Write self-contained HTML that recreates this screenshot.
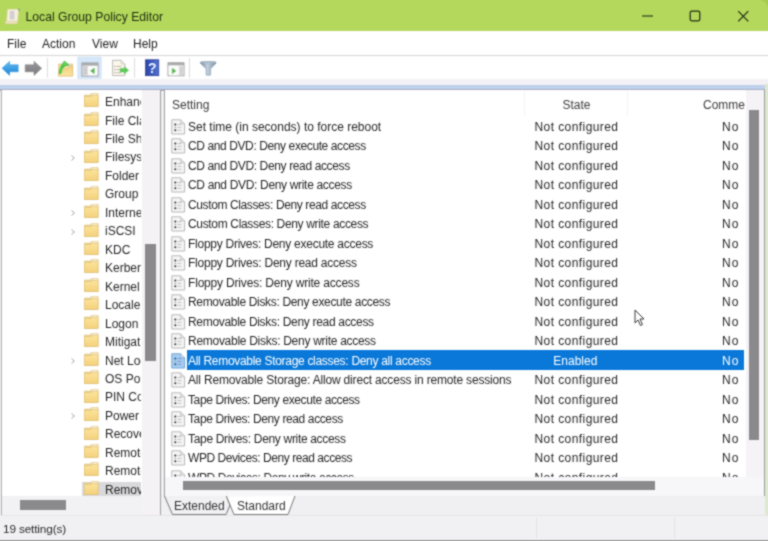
<!DOCTYPE html>
<html><head><meta charset="utf-8">
<style>
*{margin:0;padding:0;box-sizing:border-box}
html,body{width:768px;height:541px;overflow:hidden;background:#f0eff1;font-family:"Liberation Sans",sans-serif;color:#262626}
#wrap{position:absolute;left:0;top:0;width:768px;height:541px;overflow:hidden;filter:url(#bl)}
.rw,.tr,.hd,#menu span,#status .t,#title .t{-webkit-text-stroke:0px currentColor}
.abs{position:absolute}
#title{left:0;top:0;width:768px;height:31.5px;background:#b3d85c}
#title .t{left:25.5px;top:2px;line-height:31px;font-size:12.2px;color:#1e2e10;white-space:nowrap}
#menu{left:0;top:31px;width:768px;height:24px;background:#fff}
#menu span{position:absolute;top:0.3px;line-height:26px;font-size:12px;color:#222}
#menuline{left:0;top:54.5px;width:768px;height:1.5px;background:#d6d4d8}
#tool{left:0;top:56px;width:768px;height:22.5px;background:#fff}
#gap{left:0;top:78.5px;width:768px;height:6.5px;background:#f3f1f5}
#blueline{left:0;top:85px;width:765px;height:4.3px;background:#bed0ec}
#grayline{left:0;top:89.3px;width:765px;height:1.5px;background:#a9aec2}
#lp{left:1px;top:90px;width:160px;height:426px;background:#fff;border-left:1px solid #b0b0b0;border-right:1px solid #a0a0a0;border-bottom:1px solid #a0a0a0}
#lvs{left:142px;top:90px;width:18px;height:425px;background:#f4f2f5}
#lvt{left:145px;top:244px;width:10.5px;height:117px;background:#8a898b}
#lhs{left:2px;top:496px;width:140px;height:19px;background:#f2f1f3}
#lht{left:20px;top:500px;width:46px;height:10px;background:#8a898b}
#lclip{left:2px;top:90px;width:139.3px;height:406px;overflow:hidden}
.tr{position:absolute;left:0;width:140px;height:18.5px;line-height:18.5px;font-size:12px;white-space:nowrap;color:#262626}
.tr .fi{position:absolute;left:81.8px;top:0.2px}
.tr .tx{position:absolute;left:103px;top:0}
.tr .ex{position:absolute;left:69px;top:6.5px;width:4px;height:6px}
.tr.sel .hl{position:absolute;left:80px;top:1.5px;width:60px;height:16px;background:#d9d8da}
#rp{left:164px;top:90px;width:601px;height:406px;background:#fff;border-left:1px solid #a0a0a0;border-right:1px solid #9a9aa0;border-bottom:1px solid #8c8c8c}
#rclip{left:165px;top:90px;width:580px;height:387px;overflow:hidden}
#rvs{left:745.5px;top:90px;width:18.5px;height:387px;background:#f5f3f6}
#rvt{left:749px;top:110px;width:9.5px;height:330px;background:#8a898b}
#rhs{left:165px;top:477px;width:599px;height:18.5px;background:#f7f6f8}
#rht{left:183px;top:481px;width:472px;height:9px;background:#8a898b}
.hd{position:absolute;top:0;height:26px;line-height:31px;font-size:12px;color:#3a3a3a;white-space:nowrap}
.colsep{position:absolute;top:1px;width:1px;height:24px;background:#f3f2f5}
.rw{position:absolute;left:0;width:580px;height:19.5px;line-height:19.5px;font-size:12px;white-space:nowrap;color:#262626}
.rw .di{position:absolute;left:5.6px;top:0.7px}
.rw .s{position:absolute;left:23px;top:0}
.rw .st{position:absolute;left:369.5px;top:0;letter-spacing:0.42px}
.rw .no{position:absolute;left:557px;top:0;letter-spacing:1px}
.rw.sel .hlb{position:absolute;left:21.5px;top:-1.5px;width:557.5px;height:19.5px;background:#0a78d8}
.rw.sel{color:#fff}
#tabs{left:164px;top:496px;width:140px;height:20px}
#statusline{left:0;top:515px;width:768px;height:1px;background:#e6e5e8}
#status{left:0;top:516px;width:768px;height:25px;background:#f1f0f3}
#status .t{left:3px;top:0.6px;line-height:25px;font-size:11.8px;letter-spacing:-0.15px;color:#2a2a2a}
#bottomline{left:0;top:539.5px;width:768px;height:1.5px;background:#9a9a9a}
#rightedge{left:765px;top:84px;width:3px;height:457px;background:#dfe8d0}
</style></head><body><svg width="0" height="0" style="position:absolute"><filter id="bl" x="0" y="0" width="100%" height="100%" color-interpolation-filters="sRGB"><feConvolveMatrix order="3" kernelMatrix="1 2 1 2 8 2 1 2 1" divisor="20" edgeMode="duplicate"/></filter></svg><div id="wrap">

<div id="title" class="abs"><svg class="abs" style="left:0;top:0" width="24" height="31" viewBox="0 0 24 31"><path d="M7.5 9.3 H18.6 L17.6 21.5 H6.6 Z" fill="#f6f0da" stroke="#e0d6b4" stroke-width="0.6"/><rect x="9.8" y="11" width="4.6" height="8.5" fill="#d3cdd6"/><path d="M17.8 9 C19.2 9 19.8 10 19.2 11.2" fill="none" stroke="#6f7f86" stroke-width="1"/><path d="M5.4 21.3 H17.8 L16.8 23.8 H6.2 C5.2 23.8 5 22 5.4 21.3 Z" fill="#f1e6c4" stroke="#d8c9a0" stroke-width="0.6"/></svg><div class="t abs">Local Group Policy Editor</div>
<svg class="abs" style="left:750px;top:0" width="18" height="18" viewBox="0 0 18 18"><path d="M9 0 H18 V9 C18 4 14 0 9 0 Z" fill="#a6cc4e"/></svg>
<svg class="abs" style="left:641px;top:10px" width="14" height="12"><path d="M1 6 H12" stroke="#1f2a14" stroke-width="1.1"/></svg>
<svg class="abs" style="left:689px;top:10px" width="13" height="13"><rect x="1.2" y="1.2" width="9.6" height="9.6" rx="1.5" fill="none" stroke="#1f2a14" stroke-width="1.2"/></svg>
<svg class="abs" style="left:737px;top:10px" width="13" height="13"><path d="M1.2 1.2 L11.3 11.3 M11.3 1.2 L1.2 11.3" stroke="#1f2a14" stroke-width="1.2"/></svg>
</div>
<div id="menu" class="abs"><span style="left:7px">File</span><span style="left:42px">Action</span><span style="left:92px">View</span><span style="left:133px">Help</span></div><div id="menuline" class="abs"></div>
<div id="tool" class="abs"></div>
<svg class="abs" style="left:0;top:56px" width="230" height="24" viewBox="0 56 230 24">
<defs>
<linearGradient id="gb" x1="0" y1="0" x2="0" y2="1"><stop offset="0" stop-color="#62bdf2"/><stop offset="1" stop-color="#1b82d4"/></linearGradient>
<linearGradient id="gg" x1="0" y1="0" x2="0" y2="1"><stop offset="0" stop-color="#9a9a9c"/><stop offset="1" stop-color="#7a7a7c"/></linearGradient>
<linearGradient id="gfo" x1="0" y1="0" x2="0" y2="1"><stop offset="0" stop-color="#f3d27c"/><stop offset="1" stop-color="#fbe3a2"/></linearGradient>
<linearGradient id="gh" x1="0" y1="0" x2="1" y2="0"><stop offset="0" stop-color="#2a44a8"/><stop offset="1" stop-color="#4f73d4"/></linearGradient>
<linearGradient id="gf" x1="0" y1="0" x2="1" y2="0"><stop offset="0" stop-color="#71879e"/><stop offset="0.45" stop-color="#c3d0dc"/><stop offset="1" stop-color="#768ca2"/></linearGradient>
</defs>
<path d="M2 68.3 L9.6 61.3 V64.8 H18.2 V71.8 H9.6 V75.4 Z" fill="url(#gb)" stroke="#2f8fd6" stroke-width="0.5" stroke-linejoin="round"/>
<path d="M41.6 68.3 L34 61.3 V64.8 H25.2 V71.8 H34 V75.4 Z" fill="url(#gg)" stroke="#7c7c7e" stroke-width="0.5" stroke-linejoin="round"/>
<rect x="47" y="58" width="1" height="19.5" fill="#dcdadd"/>
<path d="M58.5 64 H72.6 V76 H58.5 Z" fill="#f4df98" stroke="#d9b86a" stroke-width="0.6"/>
<rect x="67" y="64.3" width="5" height="2" fill="#d9d2bd"/>
<path d="M58.5 76 V72.2 L60.8 71.8 C64.5 70.5 68 68 72.6 65.8 V76 Z" fill="url(#gfo)" stroke="#d6b466" stroke-width="0.5"/>
<path d="M60.2 72.8 C60.2 70 61.5 67.5 63.6 65.8" fill="none" stroke="#4fc84a" stroke-width="2.8" stroke-linecap="round"/>
<path d="M60.8 66.4 L64.4 61 L68.8 65 Z" fill="#5ed45a" stroke="#46b843" stroke-width="0.8" stroke-linejoin="round"/>
<rect x="77.8" y="57" width="23.4" height="21.5" fill="#d5e7f9" stroke="#cadff5" stroke-width="0.6"/>
<rect x="82" y="63" width="16" height="13" fill="#f6f6f6" stroke="#8f8f93" stroke-width="0.9"/>
<rect x="82" y="63" width="16" height="2.6" fill="#a9a9ad"/>
<rect x="82.6" y="66" width="5.2" height="9.5" fill="#d9d9dc"/>
<path d="M83.5 68 H86.8 M83.5 70.5 H86.8 M83.5 73 H86.8" stroke="#a0a0a4" stroke-width="0.6"/>
<rect x="88.3" y="66.2" width="9.1" height="9.2" fill="#fcfcfc"/>
<path d="M90.6 70.9 L94.2 68.2 V73.6 Z" fill="#55b34e" stroke="#55b34e" stroke-width="0.6" stroke-linejoin="round"/>
<path d="M112.6 60.3 H121.2 L125 64.1 V75.6 H112.6 Z" fill="#fbf7ea" stroke="#a9a9a9" stroke-width="0.8"/>
<path d="M121.2 60.3 V64.1 H125" fill="#e9e6dc" stroke="#b5b5b5" stroke-width="0.5"/>
<path d="M114.5 66.4 H115.5 M114.5 69.6 H115.5 M114.5 72.7 H115.5" stroke="#6a6a6a" stroke-width="0.9"/>
<path d="M116.6 66.4 H121.5 M116.6 69.6 H121 M116.6 72.7 H121" stroke="#9a9a9a" stroke-width="0.7"/>
<path d="M120.2 68.6 H124.4 V66.8 L128.7 70.3 L124.4 73.8 V72 H120.2 Z" fill="#5ec95a" stroke="#4dbb4a" stroke-width="0.4" stroke-linejoin="round"/>
<rect x="134" y="58" width="1" height="19.5" fill="#dcdadd"/>
<rect x="145.6" y="59.8" width="13.2" height="15.9" fill="url(#gh)" stroke="#22348a" stroke-width="0.7"/>
<text x="152.3" y="73.2" text-anchor="middle" font-family="Liberation Sans" font-size="14" font-weight="bold" fill="#eef2ff">?</text>
<rect x="168" y="62.8" width="16" height="13" fill="#f3f3f3" stroke="#959598" stroke-width="0.9"/>
<rect x="168" y="62.8" width="16" height="2.5" fill="#ababae"/>
<rect x="168.6" y="65.8" width="9.8" height="9.6" fill="#fcfcfc"/>
<path d="M172.3 68.3 L175.8 70.9 L172.3 73.5 Z" fill="#55b34e" stroke="#55b34e" stroke-width="0.6" stroke-linejoin="round"/>
<rect x="179" y="65.8" width="4.5" height="9.6" fill="#dedee0"/>
<circle cx="181.2" cy="68" r="0.55" fill="#8a8a8a"/><circle cx="181.2" cy="70.6" r="0.55" fill="#8a8a8a"/><circle cx="181.2" cy="73.2" r="0.55" fill="#8a8a8a"/>
<rect x="189" y="58" width="1" height="19.5" fill="#dcdadd"/>
<path d="M200.4 62.2 C200.4 61.2 216 61.2 216 62.2 V63.2 L210.6 68.8 V74.8 C210.6 75.6 206 75.6 206 74.8 V68.8 L200.4 63.2 Z" fill="url(#gf)" stroke="#7990a6" stroke-width="0.5"/>
<ellipse cx="208.2" cy="62.3" rx="7.2" ry="0.9" fill="#a9b9c8"/>
</svg>
<div id="gap" class="abs"></div><div id="blueline" class="abs"></div><div id="grayline" class="abs"></div>
<div id="lp" class="abs"></div><div id="lvs" class="abs"></div><div id="lvt" class="abs"></div><div id="lhs" class="abs"></div><div id="lht" class="abs"></div>
<div id="lclip" class="abs">
<div class="tr" style="top:3.10px"><svg class="fi" width="15" height="14" viewBox="0 0 15 14"><defs><linearGradient id="gfd" x1="0" y1="0" x2="0" y2="1"><stop offset="0" stop-color="#fce49c"/><stop offset="1" stop-color="#f4d17c"/></linearGradient></defs><path d="M0.4 2 H6 L7.8 0.3 H14.1 V13.5 H0.4 Z" fill="#ecd594" stroke="#dcc286" stroke-width="0.6"/><rect x="8.3" y="0.8" width="5.2" height="2" fill="#f7efd6"/><path d="M0.4 3.5 H6.8 L8.6 2.5 H14.1 V13.5 H0.4 Z" fill="url(#gfd)" stroke="#dcbc70" stroke-width="0.6"/></svg><span class="tx">Enhanced Storage Access</span></div>
<div class="tr" style="top:21.56px"><svg class="fi" width="15" height="14" viewBox="0 0 15 14"><defs><linearGradient id="gfd" x1="0" y1="0" x2="0" y2="1"><stop offset="0" stop-color="#fce49c"/><stop offset="1" stop-color="#f4d17c"/></linearGradient></defs><path d="M0.4 2 H6 L7.8 0.3 H14.1 V13.5 H0.4 Z" fill="#ecd594" stroke="#dcc286" stroke-width="0.6"/><rect x="8.3" y="0.8" width="5.2" height="2" fill="#f7efd6"/><path d="M0.4 3.5 H6.8 L8.6 2.5 H14.1 V13.5 H0.4 Z" fill="url(#gfd)" stroke="#dcbc70" stroke-width="0.6"/></svg><span class="tx">File Classification Infrastructure</span></div>
<div class="tr" style="top:40.02px"><svg class="fi" width="15" height="14" viewBox="0 0 15 14"><defs><linearGradient id="gfd" x1="0" y1="0" x2="0" y2="1"><stop offset="0" stop-color="#fce49c"/><stop offset="1" stop-color="#f4d17c"/></linearGradient></defs><path d="M0.4 2 H6 L7.8 0.3 H14.1 V13.5 H0.4 Z" fill="#ecd594" stroke="#dcc286" stroke-width="0.6"/><rect x="8.3" y="0.8" width="5.2" height="2" fill="#f7efd6"/><path d="M0.4 3.5 H6.8 L8.6 2.5 H14.1 V13.5 H0.4 Z" fill="url(#gfd)" stroke="#dcbc70" stroke-width="0.6"/></svg><span class="tx">File Share Shadow Copy Provider</span></div>
<div class="tr" style="top:58.48px"><svg class="ex" viewBox="0 0 4 6"><path d="M0.5 0.5 L3.3 3 L0.5 5.5" fill="none" stroke="#9a9a9a" stroke-width="0.9"/></svg><svg class="fi" width="15" height="14" viewBox="0 0 15 14"><defs><linearGradient id="gfd" x1="0" y1="0" x2="0" y2="1"><stop offset="0" stop-color="#fce49c"/><stop offset="1" stop-color="#f4d17c"/></linearGradient></defs><path d="M0.4 2 H6 L7.8 0.3 H14.1 V13.5 H0.4 Z" fill="#ecd594" stroke="#dcc286" stroke-width="0.6"/><rect x="8.3" y="0.8" width="5.2" height="2" fill="#f7efd6"/><path d="M0.4 3.5 H6.8 L8.6 2.5 H14.1 V13.5 H0.4 Z" fill="url(#gfd)" stroke="#dcbc70" stroke-width="0.6"/></svg><span class="tx">Filesystem</span></div>
<div class="tr" style="top:76.94px"><svg class="fi" width="15" height="14" viewBox="0 0 15 14"><defs><linearGradient id="gfd" x1="0" y1="0" x2="0" y2="1"><stop offset="0" stop-color="#fce49c"/><stop offset="1" stop-color="#f4d17c"/></linearGradient></defs><path d="M0.4 2 H6 L7.8 0.3 H14.1 V13.5 H0.4 Z" fill="#ecd594" stroke="#dcc286" stroke-width="0.6"/><rect x="8.3" y="0.8" width="5.2" height="2" fill="#f7efd6"/><path d="M0.4 3.5 H6.8 L8.6 2.5 H14.1 V13.5 H0.4 Z" fill="url(#gfd)" stroke="#dcbc70" stroke-width="0.6"/></svg><span class="tx">Folder Redirection</span></div>
<div class="tr" style="top:95.40px"><svg class="fi" width="15" height="14" viewBox="0 0 15 14"><defs><linearGradient id="gfd" x1="0" y1="0" x2="0" y2="1"><stop offset="0" stop-color="#fce49c"/><stop offset="1" stop-color="#f4d17c"/></linearGradient></defs><path d="M0.4 2 H6 L7.8 0.3 H14.1 V13.5 H0.4 Z" fill="#ecd594" stroke="#dcc286" stroke-width="0.6"/><rect x="8.3" y="0.8" width="5.2" height="2" fill="#f7efd6"/><path d="M0.4 3.5 H6.8 L8.6 2.5 H14.1 V13.5 H0.4 Z" fill="url(#gfd)" stroke="#dcbc70" stroke-width="0.6"/></svg><span class="tx">Group Policy</span></div>
<div class="tr" style="top:113.86px"><svg class="ex" viewBox="0 0 4 6"><path d="M0.5 0.5 L3.3 3 L0.5 5.5" fill="none" stroke="#9a9a9a" stroke-width="0.9"/></svg><svg class="fi" width="15" height="14" viewBox="0 0 15 14"><defs><linearGradient id="gfd" x1="0" y1="0" x2="0" y2="1"><stop offset="0" stop-color="#fce49c"/><stop offset="1" stop-color="#f4d17c"/></linearGradient></defs><path d="M0.4 2 H6 L7.8 0.3 H14.1 V13.5 H0.4 Z" fill="#ecd594" stroke="#dcc286" stroke-width="0.6"/><rect x="8.3" y="0.8" width="5.2" height="2" fill="#f7efd6"/><path d="M0.4 3.5 H6.8 L8.6 2.5 H14.1 V13.5 H0.4 Z" fill="url(#gfd)" stroke="#dcbc70" stroke-width="0.6"/></svg><span class="tx">Internet Communication Management</span></div>
<div class="tr" style="top:132.32px"><svg class="ex" viewBox="0 0 4 6"><path d="M0.5 0.5 L3.3 3 L0.5 5.5" fill="none" stroke="#9a9a9a" stroke-width="0.9"/></svg><svg class="fi" width="15" height="14" viewBox="0 0 15 14"><defs><linearGradient id="gfd" x1="0" y1="0" x2="0" y2="1"><stop offset="0" stop-color="#fce49c"/><stop offset="1" stop-color="#f4d17c"/></linearGradient></defs><path d="M0.4 2 H6 L7.8 0.3 H14.1 V13.5 H0.4 Z" fill="#ecd594" stroke="#dcc286" stroke-width="0.6"/><rect x="8.3" y="0.8" width="5.2" height="2" fill="#f7efd6"/><path d="M0.4 3.5 H6.8 L8.6 2.5 H14.1 V13.5 H0.4 Z" fill="url(#gfd)" stroke="#dcbc70" stroke-width="0.6"/></svg><span class="tx">iSCSI</span></div>
<div class="tr" style="top:150.78px"><svg class="fi" width="15" height="14" viewBox="0 0 15 14"><defs><linearGradient id="gfd" x1="0" y1="0" x2="0" y2="1"><stop offset="0" stop-color="#fce49c"/><stop offset="1" stop-color="#f4d17c"/></linearGradient></defs><path d="M0.4 2 H6 L7.8 0.3 H14.1 V13.5 H0.4 Z" fill="#ecd594" stroke="#dcc286" stroke-width="0.6"/><rect x="8.3" y="0.8" width="5.2" height="2" fill="#f7efd6"/><path d="M0.4 3.5 H6.8 L8.6 2.5 H14.1 V13.5 H0.4 Z" fill="url(#gfd)" stroke="#dcbc70" stroke-width="0.6"/></svg><span class="tx">KDC</span></div>
<div class="tr" style="top:169.24px"><svg class="fi" width="15" height="14" viewBox="0 0 15 14"><defs><linearGradient id="gfd" x1="0" y1="0" x2="0" y2="1"><stop offset="0" stop-color="#fce49c"/><stop offset="1" stop-color="#f4d17c"/></linearGradient></defs><path d="M0.4 2 H6 L7.8 0.3 H14.1 V13.5 H0.4 Z" fill="#ecd594" stroke="#dcc286" stroke-width="0.6"/><rect x="8.3" y="0.8" width="5.2" height="2" fill="#f7efd6"/><path d="M0.4 3.5 H6.8 L8.6 2.5 H14.1 V13.5 H0.4 Z" fill="url(#gfd)" stroke="#dcbc70" stroke-width="0.6"/></svg><span class="tx">Kerberos</span></div>
<div class="tr" style="top:187.70px"><svg class="fi" width="15" height="14" viewBox="0 0 15 14"><defs><linearGradient id="gfd" x1="0" y1="0" x2="0" y2="1"><stop offset="0" stop-color="#fce49c"/><stop offset="1" stop-color="#f4d17c"/></linearGradient></defs><path d="M0.4 2 H6 L7.8 0.3 H14.1 V13.5 H0.4 Z" fill="#ecd594" stroke="#dcc286" stroke-width="0.6"/><rect x="8.3" y="0.8" width="5.2" height="2" fill="#f7efd6"/><path d="M0.4 3.5 H6.8 L8.6 2.5 H14.1 V13.5 H0.4 Z" fill="url(#gfd)" stroke="#dcbc70" stroke-width="0.6"/></svg><span class="tx">Kernel DMA Protection</span></div>
<div class="tr" style="top:206.16px"><svg class="fi" width="15" height="14" viewBox="0 0 15 14"><defs><linearGradient id="gfd" x1="0" y1="0" x2="0" y2="1"><stop offset="0" stop-color="#fce49c"/><stop offset="1" stop-color="#f4d17c"/></linearGradient></defs><path d="M0.4 2 H6 L7.8 0.3 H14.1 V13.5 H0.4 Z" fill="#ecd594" stroke="#dcc286" stroke-width="0.6"/><rect x="8.3" y="0.8" width="5.2" height="2" fill="#f7efd6"/><path d="M0.4 3.5 H6.8 L8.6 2.5 H14.1 V13.5 H0.4 Z" fill="url(#gfd)" stroke="#dcbc70" stroke-width="0.6"/></svg><span class="tx">Locale Services</span></div>
<div class="tr" style="top:224.62px"><svg class="fi" width="15" height="14" viewBox="0 0 15 14"><defs><linearGradient id="gfd" x1="0" y1="0" x2="0" y2="1"><stop offset="0" stop-color="#fce49c"/><stop offset="1" stop-color="#f4d17c"/></linearGradient></defs><path d="M0.4 2 H6 L7.8 0.3 H14.1 V13.5 H0.4 Z" fill="#ecd594" stroke="#dcc286" stroke-width="0.6"/><rect x="8.3" y="0.8" width="5.2" height="2" fill="#f7efd6"/><path d="M0.4 3.5 H6.8 L8.6 2.5 H14.1 V13.5 H0.4 Z" fill="url(#gfd)" stroke="#dcbc70" stroke-width="0.6"/></svg><span class="tx">Logon</span></div>
<div class="tr" style="top:243.08px"><svg class="fi" width="15" height="14" viewBox="0 0 15 14"><defs><linearGradient id="gfd" x1="0" y1="0" x2="0" y2="1"><stop offset="0" stop-color="#fce49c"/><stop offset="1" stop-color="#f4d17c"/></linearGradient></defs><path d="M0.4 2 H6 L7.8 0.3 H14.1 V13.5 H0.4 Z" fill="#ecd594" stroke="#dcc286" stroke-width="0.6"/><rect x="8.3" y="0.8" width="5.2" height="2" fill="#f7efd6"/><path d="M0.4 3.5 H6.8 L8.6 2.5 H14.1 V13.5 H0.4 Z" fill="url(#gfd)" stroke="#dcbc70" stroke-width="0.6"/></svg><span class="tx">Mitigation Options</span></div>
<div class="tr" style="top:261.54px"><svg class="ex" viewBox="0 0 4 6"><path d="M0.5 0.5 L3.3 3 L0.5 5.5" fill="none" stroke="#9a9a9a" stroke-width="0.9"/></svg><svg class="fi" width="15" height="14" viewBox="0 0 15 14"><defs><linearGradient id="gfd" x1="0" y1="0" x2="0" y2="1"><stop offset="0" stop-color="#fce49c"/><stop offset="1" stop-color="#f4d17c"/></linearGradient></defs><path d="M0.4 2 H6 L7.8 0.3 H14.1 V13.5 H0.4 Z" fill="#ecd594" stroke="#dcc286" stroke-width="0.6"/><rect x="8.3" y="0.8" width="5.2" height="2" fill="#f7efd6"/><path d="M0.4 3.5 H6.8 L8.6 2.5 H14.1 V13.5 H0.4 Z" fill="url(#gfd)" stroke="#dcbc70" stroke-width="0.6"/></svg><span class="tx">Net Logon</span></div>
<div class="tr" style="top:280.00px"><svg class="fi" width="15" height="14" viewBox="0 0 15 14"><defs><linearGradient id="gfd" x1="0" y1="0" x2="0" y2="1"><stop offset="0" stop-color="#fce49c"/><stop offset="1" stop-color="#f4d17c"/></linearGradient></defs><path d="M0.4 2 H6 L7.8 0.3 H14.1 V13.5 H0.4 Z" fill="#ecd594" stroke="#dcc286" stroke-width="0.6"/><rect x="8.3" y="0.8" width="5.2" height="2" fill="#f7efd6"/><path d="M0.4 3.5 H6.8 L8.6 2.5 H14.1 V13.5 H0.4 Z" fill="url(#gfd)" stroke="#dcbc70" stroke-width="0.6"/></svg><span class="tx">OS Policies</span></div>
<div class="tr" style="top:298.46px"><svg class="fi" width="15" height="14" viewBox="0 0 15 14"><defs><linearGradient id="gfd" x1="0" y1="0" x2="0" y2="1"><stop offset="0" stop-color="#fce49c"/><stop offset="1" stop-color="#f4d17c"/></linearGradient></defs><path d="M0.4 2 H6 L7.8 0.3 H14.1 V13.5 H0.4 Z" fill="#ecd594" stroke="#dcc286" stroke-width="0.6"/><rect x="8.3" y="0.8" width="5.2" height="2" fill="#f7efd6"/><path d="M0.4 3.5 H6.8 L8.6 2.5 H14.1 V13.5 H0.4 Z" fill="url(#gfd)" stroke="#dcbc70" stroke-width="0.6"/></svg><span class="tx">PIN Complexity</span></div>
<div class="tr" style="top:316.92px"><svg class="ex" viewBox="0 0 4 6"><path d="M0.5 0.5 L3.3 3 L0.5 5.5" fill="none" stroke="#9a9a9a" stroke-width="0.9"/></svg><svg class="fi" width="15" height="14" viewBox="0 0 15 14"><defs><linearGradient id="gfd" x1="0" y1="0" x2="0" y2="1"><stop offset="0" stop-color="#fce49c"/><stop offset="1" stop-color="#f4d17c"/></linearGradient></defs><path d="M0.4 2 H6 L7.8 0.3 H14.1 V13.5 H0.4 Z" fill="#ecd594" stroke="#dcc286" stroke-width="0.6"/><rect x="8.3" y="0.8" width="5.2" height="2" fill="#f7efd6"/><path d="M0.4 3.5 H6.8 L8.6 2.5 H14.1 V13.5 H0.4 Z" fill="url(#gfd)" stroke="#dcbc70" stroke-width="0.6"/></svg><span class="tx">Power Management</span></div>
<div class="tr" style="top:335.38px"><svg class="fi" width="15" height="14" viewBox="0 0 15 14"><defs><linearGradient id="gfd" x1="0" y1="0" x2="0" y2="1"><stop offset="0" stop-color="#fce49c"/><stop offset="1" stop-color="#f4d17c"/></linearGradient></defs><path d="M0.4 2 H6 L7.8 0.3 H14.1 V13.5 H0.4 Z" fill="#ecd594" stroke="#dcc286" stroke-width="0.6"/><rect x="8.3" y="0.8" width="5.2" height="2" fill="#f7efd6"/><path d="M0.4 3.5 H6.8 L8.6 2.5 H14.1 V13.5 H0.4 Z" fill="url(#gfd)" stroke="#dcbc70" stroke-width="0.6"/></svg><span class="tx">Recovery</span></div>
<div class="tr" style="top:353.84px"><svg class="fi" width="15" height="14" viewBox="0 0 15 14"><defs><linearGradient id="gfd" x1="0" y1="0" x2="0" y2="1"><stop offset="0" stop-color="#fce49c"/><stop offset="1" stop-color="#f4d17c"/></linearGradient></defs><path d="M0.4 2 H6 L7.8 0.3 H14.1 V13.5 H0.4 Z" fill="#ecd594" stroke="#dcc286" stroke-width="0.6"/><rect x="8.3" y="0.8" width="5.2" height="2" fill="#f7efd6"/><path d="M0.4 3.5 H6.8 L8.6 2.5 H14.1 V13.5 H0.4 Z" fill="url(#gfd)" stroke="#dcbc70" stroke-width="0.6"/></svg><span class="tx">Remote Assistance</span></div>
<div class="tr" style="top:372.30px"><svg class="fi" width="15" height="14" viewBox="0 0 15 14"><defs><linearGradient id="gfd" x1="0" y1="0" x2="0" y2="1"><stop offset="0" stop-color="#fce49c"/><stop offset="1" stop-color="#f4d17c"/></linearGradient></defs><path d="M0.4 2 H6 L7.8 0.3 H14.1 V13.5 H0.4 Z" fill="#ecd594" stroke="#dcc286" stroke-width="0.6"/><rect x="8.3" y="0.8" width="5.2" height="2" fill="#f7efd6"/><path d="M0.4 3.5 H6.8 L8.6 2.5 H14.1 V13.5 H0.4 Z" fill="url(#gfd)" stroke="#dcbc70" stroke-width="0.6"/></svg><span class="tx">Remote Procedure Call</span></div>
<div class="tr sel" style="top:390.76px"><div class="hl"></div><svg class="fi" width="15" height="14" viewBox="0 0 15 14"><defs><linearGradient id="gfd" x1="0" y1="0" x2="0" y2="1"><stop offset="0" stop-color="#fce49c"/><stop offset="1" stop-color="#f4d17c"/></linearGradient></defs><path d="M0.4 2 H6 L7.8 0.3 H14.1 V13.5 H0.4 Z" fill="#ecd594" stroke="#dcc286" stroke-width="0.6"/><rect x="8.3" y="0.8" width="5.2" height="2" fill="#f7efd6"/><path d="M0.4 3.5 H6.8 L8.6 2.5 H14.1 V13.5 H0.4 Z" fill="url(#gfd)" stroke="#dcbc70" stroke-width="0.6"/></svg><span class="tx">Removable Storage Access</span></div>
</div>
<div id="rp" class="abs"></div><div id="rvs" class="abs"></div><div id="rvt" class="abs"></div><div id="rhs" class="abs"></div><div id="rht" class="abs"></div>
<div id="rclip" class="abs">
<span class="hd" style="left:7px">Setting</span><div class="colsep" style="left:359px"></div><span class="hd" style="left:397.5px">State</span><div class="colsep" style="left:462px"></div><span class="hd" style="left:538px">Comment</span>
<div class="rw" style="top:27.90px"><svg class="di" width="15" height="16" viewBox="0 0 15 16"><path d="M0.8 0.8 H9.6 L13.6 4.8 V15 H0.8 Z" fill="#f6f6f6" stroke="#b8b8b8" stroke-width="1"/><path d="M9.6 0.8 V4.8 H13.6" fill="#e2e2e2" stroke="#b8b8b8" stroke-width="0.7"/><circle cx="4.3" cy="5.6" r="1" fill="#2a2a2a"/><circle cx="4.3" cy="8.4" r="0.8" fill="#a0a0a0"/><circle cx="4.3" cy="11.2" r="1" fill="#2a2a2a"/><path d="M6.3 5.6 H10.5 M6.3 8.4 H10.5 M6.3 11.2 H10.5" stroke="#a8a8a8" stroke-width="0.7"/></svg><span class="s" style="letter-spacing:-0.006px">Set time (in seconds) to force reboot</span><span class="st" style="left:369.5px;">Not configured</span><span class="no">No</span></div>
<div class="rw" style="top:47.40px"><svg class="di" width="15" height="16" viewBox="0 0 15 16"><path d="M0.8 0.8 H9.6 L13.6 4.8 V15 H0.8 Z" fill="#f6f6f6" stroke="#b8b8b8" stroke-width="1"/><path d="M9.6 0.8 V4.8 H13.6" fill="#e2e2e2" stroke="#b8b8b8" stroke-width="0.7"/><circle cx="4.3" cy="5.6" r="1" fill="#2a2a2a"/><circle cx="4.3" cy="8.4" r="0.8" fill="#a0a0a0"/><circle cx="4.3" cy="11.2" r="1" fill="#2a2a2a"/><path d="M6.3 5.6 H10.5 M6.3 8.4 H10.5 M6.3 11.2 H10.5" stroke="#a8a8a8" stroke-width="0.7"/></svg><span class="s" style="letter-spacing:-0.397px">CD and DVD: Deny execute access</span><span class="st" style="left:369.5px;">Not configured</span><span class="no">No</span></div>
<div class="rw" style="top:66.90px"><svg class="di" width="15" height="16" viewBox="0 0 15 16"><path d="M0.8 0.8 H9.6 L13.6 4.8 V15 H0.8 Z" fill="#f6f6f6" stroke="#b8b8b8" stroke-width="1"/><path d="M9.6 0.8 V4.8 H13.6" fill="#e2e2e2" stroke="#b8b8b8" stroke-width="0.7"/><circle cx="4.3" cy="5.6" r="1" fill="#2a2a2a"/><circle cx="4.3" cy="8.4" r="0.8" fill="#a0a0a0"/><circle cx="4.3" cy="11.2" r="1" fill="#2a2a2a"/><path d="M6.3 5.6 H10.5 M6.3 8.4 H10.5 M6.3 11.2 H10.5" stroke="#a8a8a8" stroke-width="0.7"/></svg><span class="s" style="letter-spacing:-0.367px">CD and DVD: Deny read access</span><span class="st" style="left:369.5px;">Not configured</span><span class="no">No</span></div>
<div class="rw" style="top:86.40px"><svg class="di" width="15" height="16" viewBox="0 0 15 16"><path d="M0.8 0.8 H9.6 L13.6 4.8 V15 H0.8 Z" fill="#f6f6f6" stroke="#b8b8b8" stroke-width="1"/><path d="M9.6 0.8 V4.8 H13.6" fill="#e2e2e2" stroke="#b8b8b8" stroke-width="0.7"/><circle cx="4.3" cy="5.6" r="1" fill="#2a2a2a"/><circle cx="4.3" cy="8.4" r="0.8" fill="#a0a0a0"/><circle cx="4.3" cy="11.2" r="1" fill="#2a2a2a"/><path d="M6.3 5.6 H10.5 M6.3 8.4 H10.5 M6.3 11.2 H10.5" stroke="#a8a8a8" stroke-width="0.7"/></svg><span class="s" style="letter-spacing:-0.329px">CD and DVD: Deny write access</span><span class="st" style="left:369.5px;">Not configured</span><span class="no">No</span></div>
<div class="rw" style="top:105.90px"><svg class="di" width="15" height="16" viewBox="0 0 15 16"><path d="M0.8 0.8 H9.6 L13.6 4.8 V15 H0.8 Z" fill="#f6f6f6" stroke="#b8b8b8" stroke-width="1"/><path d="M9.6 0.8 V4.8 H13.6" fill="#e2e2e2" stroke="#b8b8b8" stroke-width="0.7"/><circle cx="4.3" cy="5.6" r="1" fill="#2a2a2a"/><circle cx="4.3" cy="8.4" r="0.8" fill="#a0a0a0"/><circle cx="4.3" cy="11.2" r="1" fill="#2a2a2a"/><path d="M6.3 5.6 H10.5 M6.3 8.4 H10.5 M6.3 11.2 H10.5" stroke="#a8a8a8" stroke-width="0.7"/></svg><span class="s" style="letter-spacing:-0.384px">Custom Classes: Deny read access</span><span class="st" style="left:369.5px;">Not configured</span><span class="no">No</span></div>
<div class="rw" style="top:125.40px"><svg class="di" width="15" height="16" viewBox="0 0 15 16"><path d="M0.8 0.8 H9.6 L13.6 4.8 V15 H0.8 Z" fill="#f6f6f6" stroke="#b8b8b8" stroke-width="1"/><path d="M9.6 0.8 V4.8 H13.6" fill="#e2e2e2" stroke="#b8b8b8" stroke-width="0.7"/><circle cx="4.3" cy="5.6" r="1" fill="#2a2a2a"/><circle cx="4.3" cy="8.4" r="0.8" fill="#a0a0a0"/><circle cx="4.3" cy="11.2" r="1" fill="#2a2a2a"/><path d="M6.3 5.6 H10.5 M6.3 8.4 H10.5 M6.3 11.2 H10.5" stroke="#a8a8a8" stroke-width="0.7"/></svg><span class="s" style="letter-spacing:-0.338px">Custom Classes: Deny write access</span><span class="st" style="left:369.5px;">Not configured</span><span class="no">No</span></div>
<div class="rw" style="top:144.90px"><svg class="di" width="15" height="16" viewBox="0 0 15 16"><path d="M0.8 0.8 H9.6 L13.6 4.8 V15 H0.8 Z" fill="#f6f6f6" stroke="#b8b8b8" stroke-width="1"/><path d="M9.6 0.8 V4.8 H13.6" fill="#e2e2e2" stroke="#b8b8b8" stroke-width="0.7"/><circle cx="4.3" cy="5.6" r="1" fill="#2a2a2a"/><circle cx="4.3" cy="8.4" r="0.8" fill="#a0a0a0"/><circle cx="4.3" cy="11.2" r="1" fill="#2a2a2a"/><path d="M6.3 5.6 H10.5 M6.3 8.4 H10.5 M6.3 11.2 H10.5" stroke="#a8a8a8" stroke-width="0.7"/></svg><span class="s" style="letter-spacing:-0.264px">Floppy Drives: Deny execute access</span><span class="st" style="left:369.5px;">Not configured</span><span class="no">No</span></div>
<div class="rw" style="top:164.40px"><svg class="di" width="15" height="16" viewBox="0 0 15 16"><path d="M0.8 0.8 H9.6 L13.6 4.8 V15 H0.8 Z" fill="#f6f6f6" stroke="#b8b8b8" stroke-width="1"/><path d="M9.6 0.8 V4.8 H13.6" fill="#e2e2e2" stroke="#b8b8b8" stroke-width="0.7"/><circle cx="4.3" cy="5.6" r="1" fill="#2a2a2a"/><circle cx="4.3" cy="8.4" r="0.8" fill="#a0a0a0"/><circle cx="4.3" cy="11.2" r="1" fill="#2a2a2a"/><path d="M6.3 5.6 H10.5 M6.3 8.4 H10.5 M6.3 11.2 H10.5" stroke="#a8a8a8" stroke-width="0.7"/></svg><span class="s" style="letter-spacing:-0.237px">Floppy Drives: Deny read access</span><span class="st" style="left:369.5px;">Not configured</span><span class="no">No</span></div>
<div class="rw" style="top:183.90px"><svg class="di" width="15" height="16" viewBox="0 0 15 16"><path d="M0.8 0.8 H9.6 L13.6 4.8 V15 H0.8 Z" fill="#f6f6f6" stroke="#b8b8b8" stroke-width="1"/><path d="M9.6 0.8 V4.8 H13.6" fill="#e2e2e2" stroke="#b8b8b8" stroke-width="0.7"/><circle cx="4.3" cy="5.6" r="1" fill="#2a2a2a"/><circle cx="4.3" cy="8.4" r="0.8" fill="#a0a0a0"/><circle cx="4.3" cy="11.2" r="1" fill="#2a2a2a"/><path d="M6.3 5.6 H10.5 M6.3 8.4 H10.5 M6.3 11.2 H10.5" stroke="#a8a8a8" stroke-width="0.7"/></svg><span class="s" style="letter-spacing:-0.184px">Floppy Drives: Deny write access</span><span class="st" style="left:369.5px;">Not configured</span><span class="no">No</span></div>
<div class="rw" style="top:203.40px"><svg class="di" width="15" height="16" viewBox="0 0 15 16"><path d="M0.8 0.8 H9.6 L13.6 4.8 V15 H0.8 Z" fill="#f6f6f6" stroke="#b8b8b8" stroke-width="1"/><path d="M9.6 0.8 V4.8 H13.6" fill="#e2e2e2" stroke="#b8b8b8" stroke-width="0.7"/><circle cx="4.3" cy="5.6" r="1" fill="#2a2a2a"/><circle cx="4.3" cy="8.4" r="0.8" fill="#a0a0a0"/><circle cx="4.3" cy="11.2" r="1" fill="#2a2a2a"/><path d="M6.3 5.6 H10.5 M6.3 8.4 H10.5 M6.3 11.2 H10.5" stroke="#a8a8a8" stroke-width="0.7"/></svg><span class="s" style="letter-spacing:-0.331px">Removable Disks: Deny execute access</span><span class="st" style="left:369.5px;">Not configured</span><span class="no">No</span></div>
<div class="rw" style="top:222.90px"><svg class="di" width="15" height="16" viewBox="0 0 15 16"><path d="M0.8 0.8 H9.6 L13.6 4.8 V15 H0.8 Z" fill="#f6f6f6" stroke="#b8b8b8" stroke-width="1"/><path d="M9.6 0.8 V4.8 H13.6" fill="#e2e2e2" stroke="#b8b8b8" stroke-width="0.7"/><circle cx="4.3" cy="5.6" r="1" fill="#2a2a2a"/><circle cx="4.3" cy="8.4" r="0.8" fill="#a0a0a0"/><circle cx="4.3" cy="11.2" r="1" fill="#2a2a2a"/><path d="M6.3 5.6 H10.5 M6.3 8.4 H10.5 M6.3 11.2 H10.5" stroke="#a8a8a8" stroke-width="0.7"/></svg><span class="s" style="letter-spacing:-0.312px">Removable Disks: Deny read access</span><span class="st" style="left:369.5px;">Not configured</span><span class="no">No</span></div>
<div class="rw" style="top:242.40px"><svg class="di" width="15" height="16" viewBox="0 0 15 16"><path d="M0.8 0.8 H9.6 L13.6 4.8 V15 H0.8 Z" fill="#f6f6f6" stroke="#b8b8b8" stroke-width="1"/><path d="M9.6 0.8 V4.8 H13.6" fill="#e2e2e2" stroke="#b8b8b8" stroke-width="0.7"/><circle cx="4.3" cy="5.6" r="1" fill="#2a2a2a"/><circle cx="4.3" cy="8.4" r="0.8" fill="#a0a0a0"/><circle cx="4.3" cy="11.2" r="1" fill="#2a2a2a"/><path d="M6.3 5.6 H10.5 M6.3 8.4 H10.5 M6.3 11.2 H10.5" stroke="#a8a8a8" stroke-width="0.7"/></svg><span class="s" style="letter-spacing:-0.282px">Removable Disks: Deny write access</span><span class="st" style="left:369.5px;">Not configured</span><span class="no">No</span></div>
<div class="rw sel" style="top:261.90px"><div class="hlb"></div><svg class="di" width="15" height="16" viewBox="0 0 15 16"><path d="M0.8 0.8 H9.6 L13.6 4.8 V15 H0.8 Z" fill="#a9cdf0" stroke="#6ea6dc" stroke-width="1"/><path d="M9.6 0.8 V4.8 H13.6" fill="#e2e2e2" stroke="#6ea6dc" stroke-width="0.7"/><circle cx="4.3" cy="5.6" r="1" fill="#1b4f86"/><circle cx="4.3" cy="8.4" r="0.8" fill="#a0a0a0"/><circle cx="4.3" cy="11.2" r="1" fill="#1b4f86"/><path d="M6.3 5.6 H10.5 M6.3 8.4 H10.5 M6.3 11.2 H10.5" stroke="#5a8ac0" stroke-width="0.7"/></svg><span class="s" style="letter-spacing:-0.302px">All Removable Storage classes: Deny all access</span><span class="st" style="left:388.3px;letter-spacing:0px">Enabled</span><span class="no">No</span></div>
<div class="rw" style="top:281.40px"><svg class="di" width="15" height="16" viewBox="0 0 15 16"><path d="M0.8 0.8 H9.6 L13.6 4.8 V15 H0.8 Z" fill="#f6f6f6" stroke="#b8b8b8" stroke-width="1"/><path d="M9.6 0.8 V4.8 H13.6" fill="#e2e2e2" stroke="#b8b8b8" stroke-width="0.7"/><circle cx="4.3" cy="5.6" r="1" fill="#2a2a2a"/><circle cx="4.3" cy="8.4" r="0.8" fill="#a0a0a0"/><circle cx="4.3" cy="11.2" r="1" fill="#2a2a2a"/><path d="M6.3 5.6 H10.5 M6.3 8.4 H10.5 M6.3 11.2 H10.5" stroke="#a8a8a8" stroke-width="0.7"/></svg><span class="s" style="letter-spacing:-0.177px">All Removable Storage: Allow direct access in remote sessions</span><span class="st" style="left:369.5px;">Not configured</span><span class="no">No</span></div>
<div class="rw" style="top:300.90px"><svg class="di" width="15" height="16" viewBox="0 0 15 16"><path d="M0.8 0.8 H9.6 L13.6 4.8 V15 H0.8 Z" fill="#f6f6f6" stroke="#b8b8b8" stroke-width="1"/><path d="M9.6 0.8 V4.8 H13.6" fill="#e2e2e2" stroke="#b8b8b8" stroke-width="0.7"/><circle cx="4.3" cy="5.6" r="1" fill="#2a2a2a"/><circle cx="4.3" cy="8.4" r="0.8" fill="#a0a0a0"/><circle cx="4.3" cy="11.2" r="1" fill="#2a2a2a"/><path d="M6.3 5.6 H10.5 M6.3 8.4 H10.5 M6.3 11.2 H10.5" stroke="#a8a8a8" stroke-width="0.7"/></svg><span class="s" style="letter-spacing:-0.387px">Tape Drives: Deny execute access</span><span class="st" style="left:369.5px;">Not configured</span><span class="no">No</span></div>
<div class="rw" style="top:320.40px"><svg class="di" width="15" height="16" viewBox="0 0 15 16"><path d="M0.8 0.8 H9.6 L13.6 4.8 V15 H0.8 Z" fill="#f6f6f6" stroke="#b8b8b8" stroke-width="1"/><path d="M9.6 0.8 V4.8 H13.6" fill="#e2e2e2" stroke="#b8b8b8" stroke-width="0.7"/><circle cx="4.3" cy="5.6" r="1" fill="#2a2a2a"/><circle cx="4.3" cy="8.4" r="0.8" fill="#a0a0a0"/><circle cx="4.3" cy="11.2" r="1" fill="#2a2a2a"/><path d="M6.3 5.6 H10.5 M6.3 8.4 H10.5 M6.3 11.2 H10.5" stroke="#a8a8a8" stroke-width="0.7"/></svg><span class="s" style="letter-spacing:-0.386px">Tape Drives: Deny read access</span><span class="st" style="left:369.5px;">Not configured</span><span class="no">No</span></div>
<div class="rw" style="top:339.90px"><svg class="di" width="15" height="16" viewBox="0 0 15 16"><path d="M0.8 0.8 H9.6 L13.6 4.8 V15 H0.8 Z" fill="#f6f6f6" stroke="#b8b8b8" stroke-width="1"/><path d="M9.6 0.8 V4.8 H13.6" fill="#e2e2e2" stroke="#b8b8b8" stroke-width="0.7"/><circle cx="4.3" cy="5.6" r="1" fill="#2a2a2a"/><circle cx="4.3" cy="8.4" r="0.8" fill="#a0a0a0"/><circle cx="4.3" cy="11.2" r="1" fill="#2a2a2a"/><path d="M6.3 5.6 H10.5 M6.3 8.4 H10.5 M6.3 11.2 H10.5" stroke="#a8a8a8" stroke-width="0.7"/></svg><span class="s" style="letter-spacing:-0.324px">Tape Drives: Deny write access</span><span class="st" style="left:369.5px;">Not configured</span><span class="no">No</span></div>
<div class="rw" style="top:359.40px"><svg class="di" width="15" height="16" viewBox="0 0 15 16"><path d="M0.8 0.8 H9.6 L13.6 4.8 V15 H0.8 Z" fill="#f6f6f6" stroke="#b8b8b8" stroke-width="1"/><path d="M9.6 0.8 V4.8 H13.6" fill="#e2e2e2" stroke="#b8b8b8" stroke-width="0.7"/><circle cx="4.3" cy="5.6" r="1" fill="#2a2a2a"/><circle cx="4.3" cy="8.4" r="0.8" fill="#a0a0a0"/><circle cx="4.3" cy="11.2" r="1" fill="#2a2a2a"/><path d="M6.3 5.6 H10.5 M6.3 8.4 H10.5 M6.3 11.2 H10.5" stroke="#a8a8a8" stroke-width="0.7"/></svg><span class="s" style="letter-spacing:-0.436px">WPD Devices: Deny read access</span><span class="st" style="left:369.5px;">Not configured</span><span class="no">No</span></div>
<div class="rw" style="top:378.90px"><svg class="di" width="15" height="16" viewBox="0 0 15 16"><path d="M0.8 0.8 H9.6 L13.6 4.8 V15 H0.8 Z" fill="#f6f6f6" stroke="#b8b8b8" stroke-width="1"/><path d="M9.6 0.8 V4.8 H13.6" fill="#e2e2e2" stroke="#b8b8b8" stroke-width="0.7"/><circle cx="4.3" cy="5.6" r="1" fill="#2a2a2a"/><circle cx="4.3" cy="8.4" r="0.8" fill="#a0a0a0"/><circle cx="4.3" cy="11.2" r="1" fill="#2a2a2a"/><path d="M6.3 5.6 H10.5 M6.3 8.4 H10.5 M6.3 11.2 H10.5" stroke="#a8a8a8" stroke-width="0.7"/></svg><span class="s" style="letter-spacing:-0.407px">WPD Devices: Deny write access</span><span class="st" style="left:369.5px;">Not configured</span><span class="no">No</span></div>
</div>
<svg class="abs" style="left:160px;top:495px" width="150" height="22" viewBox="0 0 150 22"><path d="M4.5 1 L12.5 19.5 H66 L70 10 L66.5 1" fill="#f1f0f3" stroke="#6a6a6a" stroke-width="0.9"/><path d="M66.5 1.5 L74 19.5 H128 L135 1" fill="#ffffff" stroke="#6a6a6a" stroke-width="0.9"/></svg>
<div class="abs" style="left:174px;top:496px;line-height:20px;font-size:12px;color:#333">Extended</div>
<div class="abs" style="left:237px;top:496px;line-height:20px;font-size:12px;color:#333">Standard</div>
<div id="rightedge" class="abs"></div>
<div id="statusline" class="abs"></div><div id="status" class="abs"><div class="t abs">19 setting(s)</div></div><div id="bottomline" class="abs"></div>
<div class="abs" style="left:536px;top:518px;width:1px;height:20px;background:#e2e0e5"></div><div class="abs" style="left:674px;top:518px;width:1px;height:20px;background:#e2e0e5"></div>
<svg class="abs" style="left:634px;top:309px" width="12" height="18" viewBox="0 0 12 18"><path d="M1 1 V14 L4 11 L6.5 16.5 L8.5 15.5 L6 10 H10 Z" fill="#fff" stroke="#222" stroke-width="0.9"/></svg>
</div></body></html>
